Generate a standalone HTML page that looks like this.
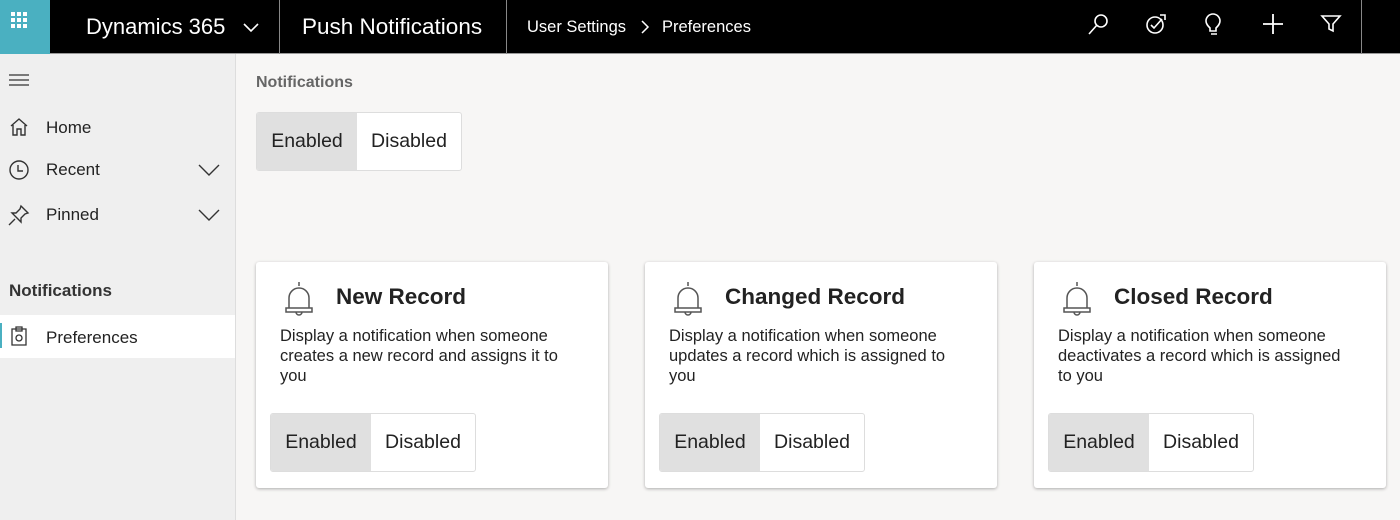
<!DOCTYPE html>
<html><head><meta charset="utf-8"><style>
*{box-sizing:border-box;margin:0;padding:0}
body{width:1400px;height:520px;overflow:hidden;font-family:"Liberation Sans",sans-serif;background:#f7f6f5;position:relative;color:#222}
.hdr{position:absolute;left:0;top:0;width:1400px;height:54px;background:#000;color:#fff;border-bottom:1px solid #999}
.waffle{position:absolute;left:0;top:0;width:50px;height:54px;background:#4ab0c1}
.t{position:absolute;white-space:nowrap}
.sep{position:absolute;top:0;width:1px;height:54px;background:#888}
.side{position:absolute;left:0;top:54px;width:236px;height:466px;background:#efefef;border-right:1px solid #ddd}
.card{position:absolute;top:262px;width:352px;height:226px;background:#fff;border-radius:3px;box-shadow:0 1px 3px rgba(0,0,0,.3)}
.tog{position:absolute;width:206px;height:59px;border:1px solid #ddd;border-radius:3px;background:#fff;display:flex;font-size:19.5px;overflow:hidden}
.tog div{display:flex;align-items:center;justify-content:center}
.tog .a{width:100px;background:#e0e0e0}
.tog .b{flex:1}
.card h2{position:absolute;left:80px;top:22px;font-size:22.5px;font-weight:bold}
.card p{position:absolute;left:24px;top:64px;width:300px;font-size:16.5px;line-height:20px}
.card svg{position:absolute;left:28px;top:18px}
</style></head><body>
<div class="hdr">
<div class="waffle"><svg width="50" height="54"><g fill="#fff"><rect x="11" y="12" width="4" height="4"/><rect x="17" y="12" width="4" height="4"/><rect x="23" y="12" width="4" height="4"/><rect x="11" y="18" width="4" height="4"/><rect x="17" y="18" width="4" height="4"/><rect x="23" y="18" width="4" height="4"/><rect x="11" y="24" width="4" height="4"/><rect x="17" y="24" width="4" height="4"/><rect x="23" y="24" width="4" height="4"/></g></svg></div>
<div class="t" style="left:86px;top:14px;font-size:22px">Dynamics 365</div>
<svg class="t" style="left:243px;top:23px" width="16" height="10"><path d="M1 1l7 7 7-7" stroke="#fff" stroke-width="1.6" fill="none"/></svg>
<div class="sep" style="left:279px"></div>
<div class="t" style="left:302px;top:14px;font-size:22.5px">Push Notifications</div>
<div class="sep" style="left:506px"></div>
<div class="t" style="left:527px;top:18px;font-size:16.5px">User Settings</div>
<svg class="t" style="left:640px;top:20px" width="10" height="14"><path d="M2 1l6 6-6 6" stroke="#fff" stroke-width="1.5" fill="none"/></svg>
<div class="t" style="left:662px;top:18px;font-size:16.5px">Preferences</div>
<svg class="t" style="left:1086px;top:12px" width="26" height="24" fill="none" stroke="#fff" stroke-width="1.6"><circle cx="15" cy="9" r="6"/><path d="M11 13l-8 9"/></svg>
<svg class="t" style="left:1144px;top:12px" width="26" height="24" fill="none" stroke="#fff" stroke-width="1.6"><circle cx="11" cy="13" r="8"/><path d="M7 13l3 3 8-9M16 3h5v5"/></svg>
<svg class="t" style="left:1204px;top:12px" width="20" height="26" fill="none" stroke="#fff" stroke-width="1.6"><path d="M6 19v-3c-2-2-4-4-4-7a7 7 0 0114 0c0 3-2 5-4 7v3zM7 22h6"/></svg>
<svg class="t" style="left:1262px;top:13px" width="22" height="22" stroke="#fff" stroke-width="1.8"><path d="M11 1v20M1 11h20"/></svg>
<svg class="t" style="left:1320px;top:14px" width="22" height="20" fill="none" stroke="#fff" stroke-width="1.6"><path d="M2 2h18l-7 8v7l-4-2v-5z"/></svg>
<div class="sep" style="left:1361px"></div>
</div>
<div class="side">
<svg class="t" style="left:9px;top:19px" width="20" height="14" stroke="#333" stroke-width="1.3"><path d="M0 2h20M0 7h20M0 12h20"/></svg>
<svg class="t" style="left:9px;top:63px" width="20" height="20" fill="none" stroke="#333" stroke-width="1.4"><path d="M2 9l8-7 8 7M4 8v10h4v-6h4v6h4V8"/></svg>
<div class="t" style="left:46px;top:64px;font-size:17px">Home</div>
<svg class="t" style="left:8px;top:105px" width="22" height="22" fill="none" stroke="#333" stroke-width="1.4"><circle cx="11" cy="11" r="9"/><path d="M10 6v6h5"/></svg>
<div class="t" style="left:46px;top:106px;font-size:17px">Recent</div>
<svg class="t" style="left:198px;top:110px" width="22" height="12" fill="none" stroke="#333" stroke-width="1.4"><path d="M1 1l10 10 10-10"/></svg>
<svg class="t" style="left:8px;top:150px" width="22" height="22" fill="none" stroke="#333" stroke-width="1.4"><path d="M13 2l7 7-3 1-4 4 0 4-9-9 4 0 4-4zM7 15l-6 6"/></svg>
<div class="t" style="left:46px;top:151px;font-size:17px">Pinned</div>
<svg class="t" style="left:198px;top:155px" width="22" height="12" fill="none" stroke="#333" stroke-width="1.4"><path d="M1 1l10 10 10-10"/></svg>
<div class="t" style="left:9px;top:227px;font-size:17px;font-weight:bold;color:#333">Notifications</div>
<div style="position:absolute;left:0;top:261px;width:235px;height:43px;background:#fff"></div>
<div style="position:absolute;left:0;top:269px;width:2px;height:25px;background:#4ab0c1"></div>
<svg class="t" style="left:11px;top:272px" width="16" height="20" fill="none" stroke="#333" stroke-width="1.3"><path d="M1 3h14v16H1zM5 1h6v4H5z"/><circle cx="8" cy="12" r="3"/></svg>
<div class="t" style="left:46px;top:274px;font-size:17px">Preferences</div>
</div>
<div class="t" style="left:256px;top:74px;font-size:16px;font-weight:bold;color:#666">Notifications</div>
<div class="tog" style="left:256px;top:112px"><div class="a">Enabled</div><div class="b">Disabled</div></div>

<div class="card" style="left:256px"><svg width="30" height="38" fill="none" stroke="#555" stroke-width="1.5"><path d="M15 2v4M5 28V18a10 10 0 0120 0v10zM2 28h26v4H2zM12 32a3 3 0 006 0"/></svg><h2>New Record</h2><p>Display a notification when someone creates a new record and assigns it to you</p><div class="tog" style="left:14px;top:151px"><div class="a">Enabled</div><div class="b">Disabled</div></div></div>
<div class="card" style="left:645px"><svg width="30" height="38" fill="none" stroke="#555" stroke-width="1.5"><path d="M15 2v4M5 28V18a10 10 0 0120 0v10zM2 28h26v4H2zM12 32a3 3 0 006 0"/></svg><h2>Changed Record</h2><p>Display a notification when someone updates a record which is assigned to you</p><div class="tog" style="left:14px;top:151px"><div class="a">Enabled</div><div class="b">Disabled</div></div></div>
<div class="card" style="left:1034px"><svg width="30" height="38" fill="none" stroke="#555" stroke-width="1.5"><path d="M15 2v4M5 28V18a10 10 0 0120 0v10zM2 28h26v4H2zM12 32a3 3 0 006 0"/></svg><h2>Closed Record</h2><p>Display a notification when someone deactivates a record which is assigned to you</p><div class="tog" style="left:14px;top:151px"><div class="a">Enabled</div><div class="b">Disabled</div></div></div>
</body></html>
